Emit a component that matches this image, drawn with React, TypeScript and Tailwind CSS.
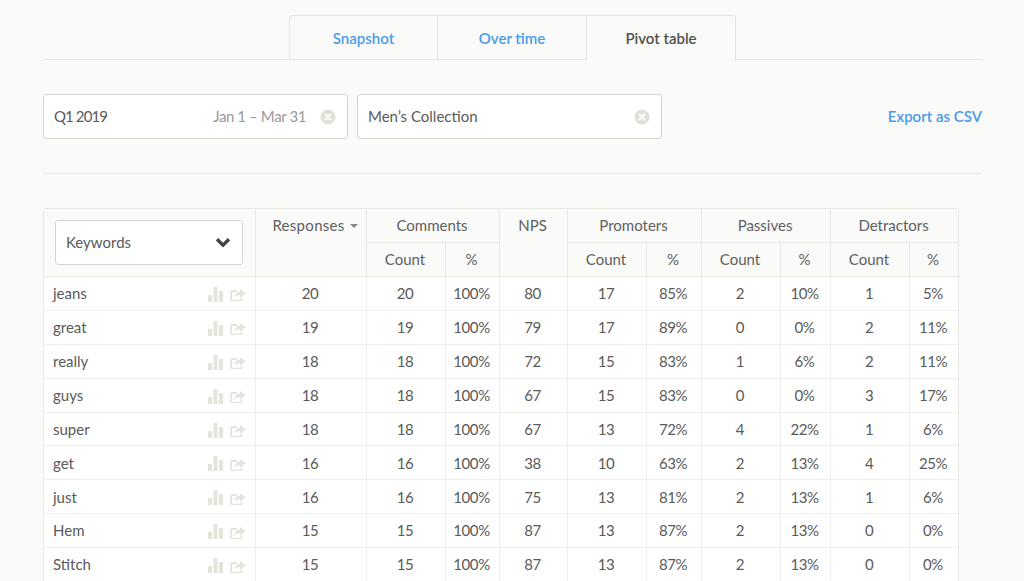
const rows = [
  ['jeans', 20, 20, '100%', 80, 17, '85%', 2, '10%', 1, '5%'],
  ['great', 19, 19, '100%', 79, 17, '89%', 0, '0%', 2, '11%'],
  ['really', 18, 18, '100%', 72, 15, '83%', 1, '6%', 2, '11%'],
  ['guys', 18, 18, '100%', 67, 15, '83%', 0, '0%', 3, '17%'],
  ['super', 18, 18, '100%', 67, 13, '72%', 4, '22%', 1, '6%'],
  ['get', 16, 16, '100%', 38, 10, '63%', 2, '13%', 4, '25%'],
  ['just', 16, 16, '100%', 75, 13, '81%', 2, '13%', 1, '6%'],
  ['Hem', 15, 15, '100%', 87, 13, '87%', 2, '13%', 0, '0%'],
  ['Stitch', 15, 15, '100%', 87, 13, '87%', 2, '13%', 0, '0%'],
];

const colWidths = ['w-[212px]', 'w-[111px]', 'w-[79px]', 'w-[54px]', 'w-[68px]', 'w-[79px]', 'w-[55px]', 'w-[79px]', 'w-[50px]', 'w-[79px]', 'w-[49px]'];

const ClearIcon = () => (
  <svg width="16" height="16" viewBox="0 0 16 16" className="shrink-0">
    <circle cx="8" cy="8" r="7.5" fill="#e0e0d9" />
    <path d="M5.5 5.5l5 5M10.5 5.5l-5 5" stroke="#fff" strokeWidth="2" strokeLinecap="round" />
  </svg>
);

const BarsIcon = () => (
  <svg width="15" height="15" viewBox="0 0 15 15">
    <rect x="0" y="8" width="4" height="7" fill="#e4e4dd" />
    <rect x="5.5" y="0" width="4" height="15" fill="#e4e4dd" />
    <rect x="11" y="4" width="4" height="11" fill="#e4e4dd" />
  </svg>
);

const ShareIcon = () => (
  <svg width="16" height="12" viewBox="0 0 16 12" className="mt-[2px]">
    <path d="M7 2H2.2a1 1 0 0 0-1 1v7.8a1 1 0 0 0 1 1H10.5a1 1 0 0 0 1-1V8.5" fill="none" stroke="#e4e4dd" strokeWidth="1.9" />
    <path d="M10 0l6 4.2-6 4.2V6C7.8 6 6 6.8 4.6 9 4.7 5.2 7 2.6 10 2.4z" fill="#e4e4dd" />
  </svg>
);

const ChevronIcon = () => (
  <svg width="16" height="11" viewBox="0 0 16 11">
    <path d="M2 2.2l6 6 6-6" fill="none" stroke="#444" strokeWidth="3.4" />
  </svg>
);

const Tab = ({ label, active, width }: { label: string; active?: boolean; width: string }) => (
  <div className={`${width} h-[45px] flex items-center justify-center border-r border-[#e6e6e1] font-semibold text-[15px] ${active ? 'bg-[#fafaf8] text-[#4f4f4f] relative top-px pb-[2px]' : 'text-[#4a9aea] pb-px'}`}>
    {label}
  </div>
);

const Filter = ({ label, range }: { label: string; range?: string }) => (
  <div className="w-[305px] h-[45px] flex items-center bg-white border border-[#d5d5cf] rounded-[3px] pl-[10px] pr-[11px] text-[15px] text-[#5a5a5a]">
    <span className={`flex-1 ${range ? 'tracking-[-0.9px]' : ''}`}>{label}</span>
    {range && <span className="text-[#999] mr-[14px] tracking-[-0.4px]">{range}</span>}
    <ClearIcon />
  </div>
);

const th = 'border-l border-b border-[#e9e9e4] font-normal text-[15px] text-[#5f5f5f] text-center align-middle';
const numCell = 'border-l border-b border-[#eeeeea] text-[15px] text-[#5a5a5a] text-center tracking-[-0.4px] pr-[2px]';

export default function App() {
  return (
    <div className="h-[581px] overflow-hidden bg-[#fafaf8] px-[43px] pt-[15px] font-['Lato','Open_Sans',sans-serif]">
      <div className="w-[939px] h-[45px] border-b border-[#e6e6e1] flex justify-center">
        <div className="flex h-[45px] border-t border-l border-[#e6e6e1] rounded-t-[3px]">
          <Tab label="Snapshot" width="w-[148px]" />
          <Tab label="Over time" width="w-[149px]" />
          <Tab label="Pivot table" width="w-[149px]" active />
        </div>
      </div>

      <div className="w-[939px] h-[79px] pt-[34px] box-content border-b border-[#e9e9e4] flex items-start gap-[9px]">
        <Filter label="Q1 2019" range="Jan 1 – Mar 31" />
        <Filter label="Men’s Collection" />
        <a className="ml-auto mt-[11px] text-[15px] font-semibold text-[#4a9aea]">Export as CSV</a>
      </div>

      <div className="mt-[34px] w-[916px] border-t border-r border-[#e9e9e4] rounded-t-[4px] overflow-hidden">
        <table className="table-fixed border-separate border-spacing-0 w-[915px]">
          <colgroup>
            {colWidths.map((w, i) => <col key={i} className={w} />)}
          </colgroup>
          <thead>
            <tr className="h-[34px]">
              <th rowSpan={2} className={`${th} pl-[11px] pr-[12px]`}>
                <div className="h-[45px] flex items-center justify-between bg-white border border-[#d5d5cf] rounded-[3px] pl-[10px] pr-[11px]">
                  <span className="text-[#5a5a5a]">Keywords</span>
                  <ChevronIcon />
                </div>
              </th>
              <th rowSpan={2} className={`${th} align-top pt-[5px]`}>
                <span className="relative left-[4px] tracking-[0.3px]">
                  Responses
                  <span className="inline-block ml-[5px] mb-[3px] border-x-[4px] border-t-[4px] border-x-transparent border-t-[#888]" />
                </span>
              </th>
              <th colSpan={2} className={`${th} pr-[2px]`}>Comments</th>
              <th rowSpan={2} className={`${th} align-top pt-[5px] pr-[2px]`}>NPS</th>
              <th colSpan={2} className={`${th} pr-[2px]`}>Promoters</th>
              <th colSpan={2} className={`${th} pr-[2px]`}>Passives</th>
              <th colSpan={2} className={`${th} pr-[2px]`}>Detractors</th>
            </tr>
            <tr className="h-[34px]">
              {['Count', '%', 'Count', '%', 'Count', '%', 'Count', '%'].map((h, i) => (
                <th key={i} className={`${th} pr-[2px]`}>{h}</th>
              ))}
            </tr>
          </thead>
          <tbody className="bg-white">
            {rows.map((r) => (
              <tr key={r[0]} className="h-[33.9px]">
                <td className="border-l border-b border-[#eeeeea] text-[15px] text-[#5a5a5a] text-left pl-[9px] pr-[9px]">
                  <div className="flex items-center justify-between">
                    <span>{r[0]}</span>
                    <span className="flex items-center gap-[7px] mt-[2px]">
                      <BarsIcon />
                      <ShareIcon />
                    </span>
                  </div>
                </td>
                {r.slice(1).map((v, i) => <td key={i} className={numCell}>{v}</td>)}
              </tr>
            ))}
          </tbody>
        </table>
      </div>
    </div>
  );
}
